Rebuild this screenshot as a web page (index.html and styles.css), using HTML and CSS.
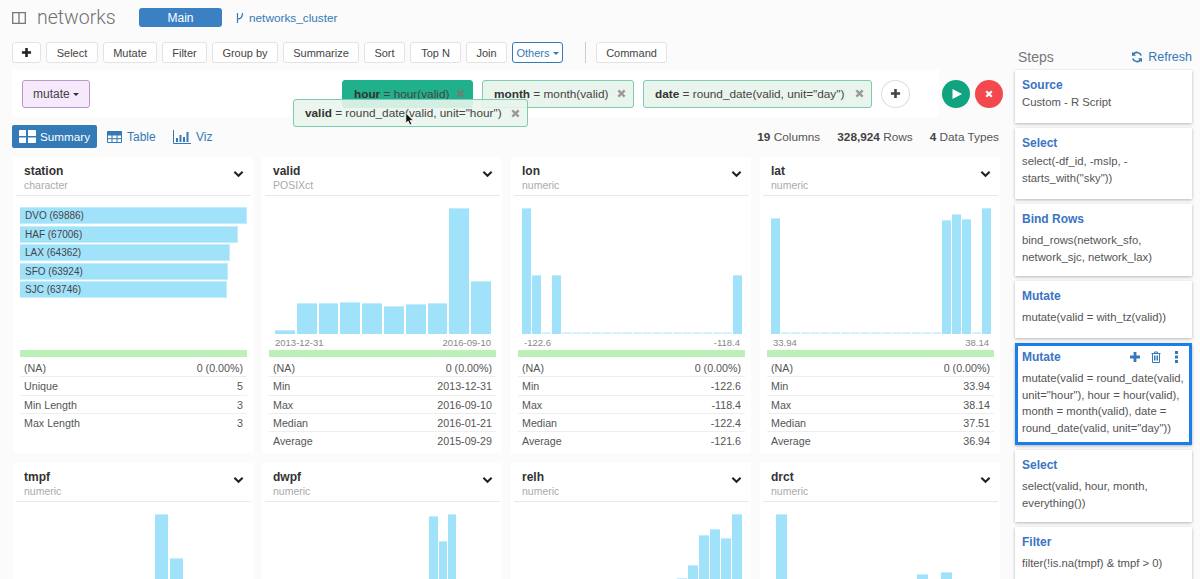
FILE: index.html
```html
<!DOCTYPE html>
<html lang="en">
<head>
<meta charset="utf-8">
<title>networks</title>
<link rel="stylesheet" href="styles.css">
</head>
<body>
<svg class="defs" width="0" height="0" aria-hidden="true">
  <symbol id="chev" viewBox="0 0 12 8"><path d="M1.5 1.5 6 6l4.500-4.500" fill="none" stroke="currentColor" stroke-width="2.200"/></symbol>
  <symbol id="x" viewBox="0 0 10 10"><path d="M1.500 1.500l7 7M8.500 1.500l-7 7" fill="none" stroke="currentColor" stroke-width="2.600"/></symbol>
  <symbol id="plus" viewBox="0 0 12 12"><path d="M6 1v10M1 6h10" fill="none" stroke="currentColor" stroke-width="2.800"/></symbol>
</svg>
<div class="page">
  <main class="main">
    <header class="head">
      <svg class="book" viewBox="0 0 14 12" width="14" height="12"><path d="M.7.7h12.600v10.600H.7zM7 .7v10.600" fill="none" stroke="#777" stroke-width="1.300"/></svg>
      <h1 class="title">networks</h1>
      <button class="main-btn">Main</button>
      <a class="branch"><svg viewBox="0 0 8 12" width="8" height="12"><path d="M1.500 1v10M1.500 7C5 7 6.500 5 6.500 1" fill="none" stroke="#337ab7" stroke-width="1.200"/></svg>networks_cluster</a>
    </header>

    <nav class="tools">
      <button class="tool plus-btn"><svg width="11" height="11"><use href="#plus"/></svg></button>
      <button class="tool w-select">Select</button>
      <button class="tool w-mutate">Mutate</button>
      <button class="tool w-filter">Filter</button>
      <button class="tool w-group">Group by</button>
      <button class="tool w-sum">Summarize</button>
      <button class="tool w-sort">Sort</button>
      <button class="tool w-top">Top N</button>
      <button class="tool w-join">Join</button>
      <button class="tool others">Others <span class="caret"></span></button>
      <span class="divider"></span>
      <button class="tool w-cmd">Command</button>
    </nav>

    <section class="editor">
      <div class="band">
        <button class="verb">mutate <span class="caret dark"></span></button>
        <div class="chips">
          <div class="chip chip-on w-hour"><span><b>hour</b> = hour(valid)</span><svg class="chip-x" width="9" height="9"><use href="#x"/></svg></div>
          <div class="chip w-month"><span><b>month</b> = month(valid)</span><svg class="chip-x" width="9" height="9"><use href="#x"/></svg></div>
          <div class="chip w-date"><span><b>date</b> = round_date(valid, unit="day")</span><svg class="chip-x" width="9" height="9"><use href="#x"/></svg></div>
          <button class="add"><svg width="11" height="11"><use href="#plus"/></svg></button>
        </div>
        <div class="chip drag"><span><b>valid</b> = round_date(valid, unit="hour")</span><svg class="chip-x" width="9" height="9"><use href="#x"/></svg></div>
        <svg class="cursor" viewBox="0 0 10 15" width="9" height="14"><path d="M1 1v11l2.500-2.300L5.500 14l2-1-2-4H9z" fill="#111" stroke="#fff" stroke-width=".7"/></svg>
      </div>
      <button class="run"><svg viewBox="0 0 12 12" width="12" height="12"><path d="M1.500 1v10L11 6z" fill="#fff"/></svg></button>
      <button class="stop"><svg width="8" height="8"><use href="#x"/></svg></button>
    </section>

    <div class="tabs">
      <button class="tab tab-on"><svg viewBox="0 0 17 13" width="17" height="13"><path d="M0 1a1 1 0 0 1 1-1h6v6H0zM9 0h7a1 1 0 0 1 1 1v5H9zM0 7.500h7V13H1a1 1 0 0 1-1-1zM9 7.500h8V12a1 1 0 0 1-1 1H9z" fill="#fff"/></svg>Summary</button>
      <button class="tab tab-table"><svg viewBox="0 0 15 12" width="15" height="12"><path d="M.5.500h14v11H.5zM.5 4h14M.5 7.700h14M5 .500v11M10 .500v11" fill="none" stroke="#337ab7"/><path d="M.5.500h14V4H.5z" fill="#337ab7"/></svg>Table</button>
      <button class="tab tab-viz"><svg viewBox="0 0 18 14" width="18" height="14"><path d="M.5 0v13.500H18" fill="none" stroke="#337ab7"/><path d="M3 8h2v4H3zM6.500 5h2v7h-2zM10 7h2v5h-2zM13.500 2h2v10h-2z" fill="#337ab7"/></svg>Viz</button>
      <p class="meta"><span><b>19</b> Columns</span><span><b>328,924</b> Rows</span><span><b>4</b> Data Types</span></p>
    </div>

    <div class="grid">
      <article class="card">
        <header class="card-head"><div><h3>station</h3><small>character</small></div><svg class="chev" width="11" height="8"><use href="#chev"/></svg></header>
        <div class="cats">
          <div class="cat" style="width:227px">DVO (69886)</div>
          <div class="cat" style="width:218px">HAF (67006)</div>
          <div class="cat" style="width:210px">LAX (64362)</div>
          <div class="cat" style="width:208px">SFO (63924)</div>
          <div class="cat" style="width:207px">SJC (63746)</div>
        </div>
        <div class="ok"></div>
        <dl class="stats">
          <div><dt>(NA)</dt><dd>0 (0.00%)</dd></div>
          <div><dt>Unique</dt><dd>5</dd></div>
          <div><dt>Min Length</dt><dd>3</dd></div>
          <div><dt>Max Length</dt><dd>3</dd></div>
        </dl>
      </article>

      <article class="card">
        <header class="card-head"><div><h3>valid</h3><small>POSIXct</small></div><svg class="chev" width="11" height="8"><use href="#chev"/></svg></header>
        <div class="bars g2 inset13">
          <i style="height:4px"></i><i style="height:31px"></i><i style="height:31px"></i><i style="height:32px"></i><i style="height:31px"></i><i style="height:28px"></i><i style="height:30px"></i><i style="height:31px"></i><i style="height:126px"></i><i style="height:53px"></i>
        </div>
        <div class="axis"><span>2013-12-31</span><span>2016-09-10</span></div>
        <div class="ok"></div>
        <dl class="stats">
          <div><dt>(NA)</dt><dd>0 (0.00%)</dd></div>
          <div><dt>Min</dt><dd>2013-12-31</dd></div>
          <div><dt>Max</dt><dd>2016-09-10</dd></div>
          <div><dt>Median</dt><dd>2016-01-21</dd></div>
          <div><dt>Average</dt><dd>2015-09-29</dd></div>
        </dl>
      </article>

      <article class="card">
        <header class="card-head"><div><h3>lon</h3><small>numeric</small></div><svg class="chev" width="11" height="8"><use href="#chev"/></svg></header>
        <div class="bars inset11">
          <i style="height:126px"></i><i style="height:59px"></i><i class="nil"></i><i style="height:59px"></i><i class="nil"></i><i class="nil"></i><i class="nil"></i><i class="nil"></i><i class="nil"></i><i class="nil"></i><i class="nil"></i><i class="nil"></i><i class="nil"></i><i class="nil"></i><i class="nil"></i><i class="nil"></i><i class="nil"></i><i class="nil"></i><i class="nil"></i><i class="nil"></i><i class="nil"></i><i style="height:59px"></i>
        </div>
        <div class="axis"><span>-122.6</span><span>-118.4</span></div>
        <div class="ok"></div>
        <dl class="stats">
          <div><dt>(NA)</dt><dd>0 (0.00%)</dd></div>
          <div><dt>Min</dt><dd>-122.6</dd></div>
          <div><dt>Max</dt><dd>-118.4</dd></div>
          <div><dt>Median</dt><dd>-122.4</dd></div>
          <div><dt>Average</dt><dd>-121.6</dd></div>
        </dl>
      </article>

      <article class="card">
        <header class="card-head"><div><h3>lat</h3><small>numeric</small></div><svg class="chev" width="11" height="8"><use href="#chev"/></svg></header>
        <div class="bars inset11">
          <i style="height:116px"></i><i class="nil"></i><i class="nil"></i><i class="nil"></i><i class="nil"></i><i class="nil"></i><i class="nil"></i><i class="nil"></i><i class="nil"></i><i class="nil"></i><i class="nil"></i><i class="nil"></i><i class="nil"></i><i class="nil"></i><i class="nil"></i><i class="nil"></i><i class="nil"></i><i style="height:114px"></i><i style="height:120px"></i><i style="height:115px"></i><i class="nil"></i><i style="height:126px"></i>
        </div>
        <div class="axis"><span>33.94</span><span>38.14</span></div>
        <div class="ok"></div>
        <dl class="stats">
          <div><dt>(NA)</dt><dd>0 (0.00%)</dd></div>
          <div><dt>Min</dt><dd>33.94</dd></div>
          <div><dt>Max</dt><dd>38.14</dd></div>
          <div><dt>Median</dt><dd>37.51</dd></div>
          <div><dt>Average</dt><dd>36.94</dd></div>
        </dl>
      </article>

      <article class="card">
        <header class="card-head"><div><h3>tmpf</h3><small>numeric</small></div><svg class="chev" width="11" height="8"><use href="#chev"/></svg></header>
        <div class="bars inset-tmpf g2">
          <i class="nil"></i><i class="nil"></i><i class="nil"></i><i class="nil"></i><i class="nil"></i><i class="nil"></i><i class="nil"></i><i class="nil"></i><i class="nil"></i><i style="height:126px"></i><i style="height:82px"></i><i class="nil"></i><i class="nil"></i><i class="nil"></i><i class="nil"></i>
        </div>
      </article>

      <article class="card">
        <header class="card-head"><div><h3>dwpf</h3><small>numeric</small></div><svg class="chev" width="11" height="8"><use href="#chev"/></svg></header>
        <div class="bars inset11">
          <i class="nil"></i><i class="nil"></i><i class="nil"></i><i class="nil"></i><i class="nil"></i><i class="nil"></i><i class="nil"></i><i class="nil"></i><i class="nil"></i><i class="nil"></i><i class="nil"></i><i class="nil"></i><i class="nil"></i><i class="nil"></i><i class="nil"></i><i class="nil"></i><i class="nil"></i><i style="height:124px"></i><i style="height:99px"></i><i style="height:126px"></i><i class="nil"></i><i class="nil"></i><i class="nil"></i><i class="nil"></i>
        </div>
      </article>

      <article class="card">
        <header class="card-head"><div><h3>relh</h3><small>numeric</small></div><svg class="chev" width="11" height="8"><use href="#chev"/></svg></header>
        <div class="bars inset11">
          <i class="nil"></i><i class="nil"></i><i class="nil"></i><i class="nil"></i><i class="nil"></i><i class="nil"></i><i class="nil"></i><i class="nil"></i><i class="nil"></i><i class="nil"></i><i class="nil"></i><i class="nil"></i><i class="nil"></i><i class="nil"></i><i style="height:62px"></i><i style="height:75px"></i><i style="height:105px"></i><i style="height:111px"></i><i style="height:102px"></i><i style="height:126px"></i>
        </div>
      </article>

      <article class="card">
        <header class="card-head"><div><h3>drct</h3><small>numeric</small></div><svg class="chev" width="11" height="8"><use href="#chev"/></svg></header>
        <div class="bars inset-drct">
          <i style="height:126px"></i><i class="nil"></i><i class="nil"></i><i class="nil"></i><i class="nil"></i><i class="nil"></i><i class="nil"></i><i class="nil"></i><i class="nil"></i><i class="nil"></i><i class="nil"></i><i class="nil"></i><i style="height:66px"></i><i class="nil"></i><i style="height:68px"></i><i class="nil"></i><i class="nil"></i><i class="nil"></i>
        </div>
      </article>
    </div>
  </main>

  <aside class="side">
    <div class="side-head">
      <span class="steps">Steps</span>
      <a class="refresh"><svg viewBox="0 0 12 12" width="12" height="12"><path d="M10.200 4.500A4.500 4.500 0 0 0 2.300 3.300M1.800 7.500a4.500 4.500 0 0 0 7.900 1.200" fill="none" stroke="#337ab7" stroke-width="1.700"/><path d="M1 .800v4h4zM11 11.200v-4H7z" fill="#337ab7"/></svg>Refresh</a>
    </div>
    <div class="step s-source"><h4>Source</h4><p>Custom - R Script</p></div>
    <div class="step s-select"><h4>Select</h4><p>select(-df_id, -mslp, -starts_with("sky"))</p></div>
    <div class="step s-wide"><h4>Bind Rows</h4><p>bind_rows(network_sfo, network_sjc, network_lax)</p></div>
    <div class="step s-one"><h4>Mutate</h4><p>mutate(valid = with_tz(valid))</p></div>
    <div class="step s-active">
      <div class="step-top"><h4>Mutate</h4>
        <span class="step-icons">
          <svg class="ic-plus" width="12" height="12"><use href="#plus"/></svg>
          <svg class="ic-trash" viewBox="0 0 10 12" width="10" height="12"><path d="M.5 2.500h9M3.500 2.500V1h3v1.500M1.500 2.500V11.500h7V2.500M3.500 4.500v5M5 4.500v5M6.500 4.500v5" fill="none" stroke="#337ab7"/></svg>
          <svg class="ic-dots" viewBox="0 0 4 12" width="4" height="12"><path d="M0 0h3v3H0zM0 4.500h3v3H0zM0 9h3v3H0z" fill="#337ab7"/></svg>
        </span>
      </div>
      <p>mutate(valid = round_date(valid, unit="hour"), hour = hour(valid), month = month(valid), date = round_date(valid, unit="day"))</p>
    </div>
    <div class="step s-wide"><h4>Select</h4><p>select(valid, hour, month, everything())</p></div>
    <div class="step s-one"><h4>Filter</h4><p>filter(!is.na(tmpf) &amp; tmpf &gt; 0)</p></div>
  </aside>
</div>
</body>
</html>
```

FILE: styles.css
```css
* { box-sizing: border-box; }
html, body { margin: 0; height: 579px; overflow: hidden; }
body { background: #fbfbfb; font-family: "Liberation Sans", Arial, sans-serif; color: #444; font-size: 11px; }
button { font-family: inherit; cursor: default; }
h1, h3, h4, p, dl, dd { margin: 0; }
.defs { position: absolute; }
.page { display: flex; height: 579px; overflow: hidden; }
.main { width: 1014px; flex: none; }

.head { display: flex; align-items: center; height: 35px; padding: 0 0 0 12px; }
.book { flex: none; }
.title { font-family: Roboto, sans-serif; font-weight: 300; font-size: 19.500px; color: #707070; margin-left: 11px; width: 102px; }
.main-btn { width: 83px; height: 19px; padding: 0; border: 0; border-radius: 3px; background: #3a80c2; color: #fff; font-size: 12px; }
.branch { display: flex; align-items: center; gap: 5px; margin-left: 14px; color: #337ab7; font-size: 11.800px; }

.tools { display: flex; align-items: center; height: 21px; margin: 7px 0 0 12px; gap: 5px; }
.tool { height: 21px; padding: 0; border: 1px solid #e3e3e3; border-radius: 3px; background: #fff; color: #444; font-size: 11px; flex: none; }
.plus-btn { width: 29px; color: #222; display: flex; align-items: center; justify-content: center; }
.w-select { width: 52px; } .w-mutate { width: 54px; } .w-filter { width: 45px; } .w-group { width: 66px; }
.w-sum { width: 76px; } .w-sort { width: 41px; } .w-top { width: 51px; } .w-join { width: 41px; }
.others { width: 51px; border-color: #337ab7; color: #337ab7; }
.divider { width: 1px; height: 21px; background: #ccc; margin: 0 5px 0 17px; }
.w-cmd { width: 71px; }
.caret { display: inline-block; width: 0; height: 0; border: 3px solid transparent; border-top-color: #337ab7; border-bottom: 0; vertical-align: 2px; }
.caret.dark { border-top-color: #333; }

.editor { display: flex; align-items: center; margin: 7px 0 0 12px; height: 47px; }
.band { position: relative; display: flex; align-items: center; justify-content: space-between; width: 927px; height: 47px; background: #fff; padding: 0 29px 0 10px; }
.verb { width: 68px; height: 28px; padding: 0; background: #f5e9fb; border: 1px solid #b79ac9; border-radius: 3px; font-size: 12px; color: #444; }
.chips { display: flex; align-items: center; gap: 9px; }
.chip { display: flex; align-items: center; justify-content: space-between; height: 28px; padding: 0 7px 0 11px; background: #e9f5ec; border: 1px solid #7ccbb2; border-radius: 3px; font-size: 11.800px; color: #444; }
.chip b { color: #333; }
.chip-x { color: #999; flex: none; }
.chip-on { background: #21b08c; border-color: #21b08c; }
.chip-on .chip-x { color: #6b7f78; }
.w-hour { width: 131px; } .w-month { width: 152px; } .w-date { width: 229px; }
.add { width: 29px; height: 28px; padding: 0; border: 1px solid #ddd; border-radius: 50%; background: #fff; color: #444; display: flex; align-items: center; justify-content: center; }
.drag { position: absolute; left: 281px; top: 29px; width: 235px; background: rgba(233, 245, 236, .9); }
.cursor { position: absolute; left: 393px; top: 42px; }
.run, .stop { width: 28px; height: 28px; padding: 0; border: 0; border-radius: 50%; color: #fff; display: flex; align-items: center; justify-content: center; }
.run { background: #0fa37f; margin-left: 3px; padding-left: 2px; }
.stop { background: #f4484f; margin-left: 5px; }

.tabs { display: flex; align-items: center; height: 23px; margin: 8px 0 0 12px; padding-right: 15px; }
.tab { display: flex; align-items: center; height: 23px; padding: 0; border: 0; background: none; color: #337ab7; font-size: 12px; flex: none; }
.tab-on { width: 85px; background: #337ab7; color: #fff; gap: 4px; padding-left: 7px; border-radius: 2px; margin-right: 10px; font-size: 11.700px; }
.tab-table { width: 66px; gap: 5px; }
.tab-viz { gap: 5px; }
.meta { margin-left: auto; display: flex; gap: 17px; font-size: 11.800px; color: #555; }
.meta b { color: #444; }

.grid { display: grid; grid-template-columns: repeat(4, 240px); column-gap: 9px; row-gap: 10px; margin: 9px 0 0 13px; }
.card { height: 296px; background: #fff; padding: 0 0 0 3px; overflow: hidden; }
.card-head { display: flex; justify-content: space-between; height: 39px; padding: 8px 7px 0 8px; border-bottom: 1px solid #e9e9e9; margin-right: 2px; }
.card-head h3 { font-size: 12px; line-height: 13px; color: #333; }
.card-head small { display: block; font-size: 10.500px; line-height: 15px; color: #aaa; }
.chev { color: #222; margin: 5px 0 0; }

.cats { height: 154px; padding: 11px 0 0 4px; }
.cat { height: 17px; margin-bottom: 1.500px; padding-left: 5px; background: #a1e2fb; border: solid #c2edfd; border-width: 1px 1px 1px 0; font-size: 10px; line-height: 15px; color: #444; }
.bars { display: flex; align-items: flex-end; gap: 1px; height: 126px; margin-top: 12px; }
.bars.g2 { gap: 2px; }
.inset13 { padding: 0 11px 0 10px; }
.inset11 { padding: 0 9px 0 8px; }
.inset-tmpf { padding: 0 12px 0 8px; }
.inset-drct { padding: 0 13px 0 13px; }
.bars i { flex: 1 1 0; background: #a1e2fb; border-top: 1px solid #c2edfd; }
.bars i.nil { height: 2px; background: #d3f2fd; border: 0; }
.axis { display: flex; justify-content: space-between; height: 16px; padding: 3px 11px 0 10px; font-size: 9.500px; line-height: 12px; color: #888; }
.ok { height: 7px; margin: 0 6px 0 4px; background: #bbf0b8; }
.stats { margin: 2px 6px 0 4px; }
.stats div { display: flex; justify-content: space-between; height: 18.300px; padding: 0 4px; border-bottom: 1px solid #eee; line-height: 18px; font-size: 10.700px; color: #555; }
.stats div:last-child { border-bottom: 0; }

.side { flex: 1; padding: 0 8px 0 1px; }
.side-head { display: flex; justify-content: space-between; align-items: center; height: 70px; padding: 50px 0 6px 3px; }
.steps { font-size: 14px; color: #777; }
.refresh { display: flex; align-items: center; gap: 5px; font-size: 12.500px; color: #337ab7; }
.step { background: #fff; box-shadow: 0 1px 3px rgba(0, 0, 0, .28); padding: 7px 4px 0 7px; margin-bottom: 5px; overflow: hidden; }
.step h4 { font-size: 12px; line-height: 16px; color: #3a74c5; }
.step p { font-size: 11.300px; line-height: 16.500px; color: #555; margin-top: 5px; }
.s-source { height: 53px; }
.s-source p { margin-top: 1px; }
.s-select { height: 71px; }
.s-select p { margin-top: 2px; }
.s-wide { height: 72px; }
.s-one { height: 57px; }
.s-active { height: 102px; border: 3px solid #1a7fe8; padding: 3px 0 0 4px; box-shadow: 0 1px 3px rgba(0, 0, 0, .3); }
.step-top { display: flex; justify-content: space-between; align-items: center; }
.step-icons { display: flex; align-items: center; margin-right: 10px; }
.ic-trash { margin-left: 10px; }
.ic-dots { margin-left: 14px; }
.ic-plus { color: #337ab7; }
```
